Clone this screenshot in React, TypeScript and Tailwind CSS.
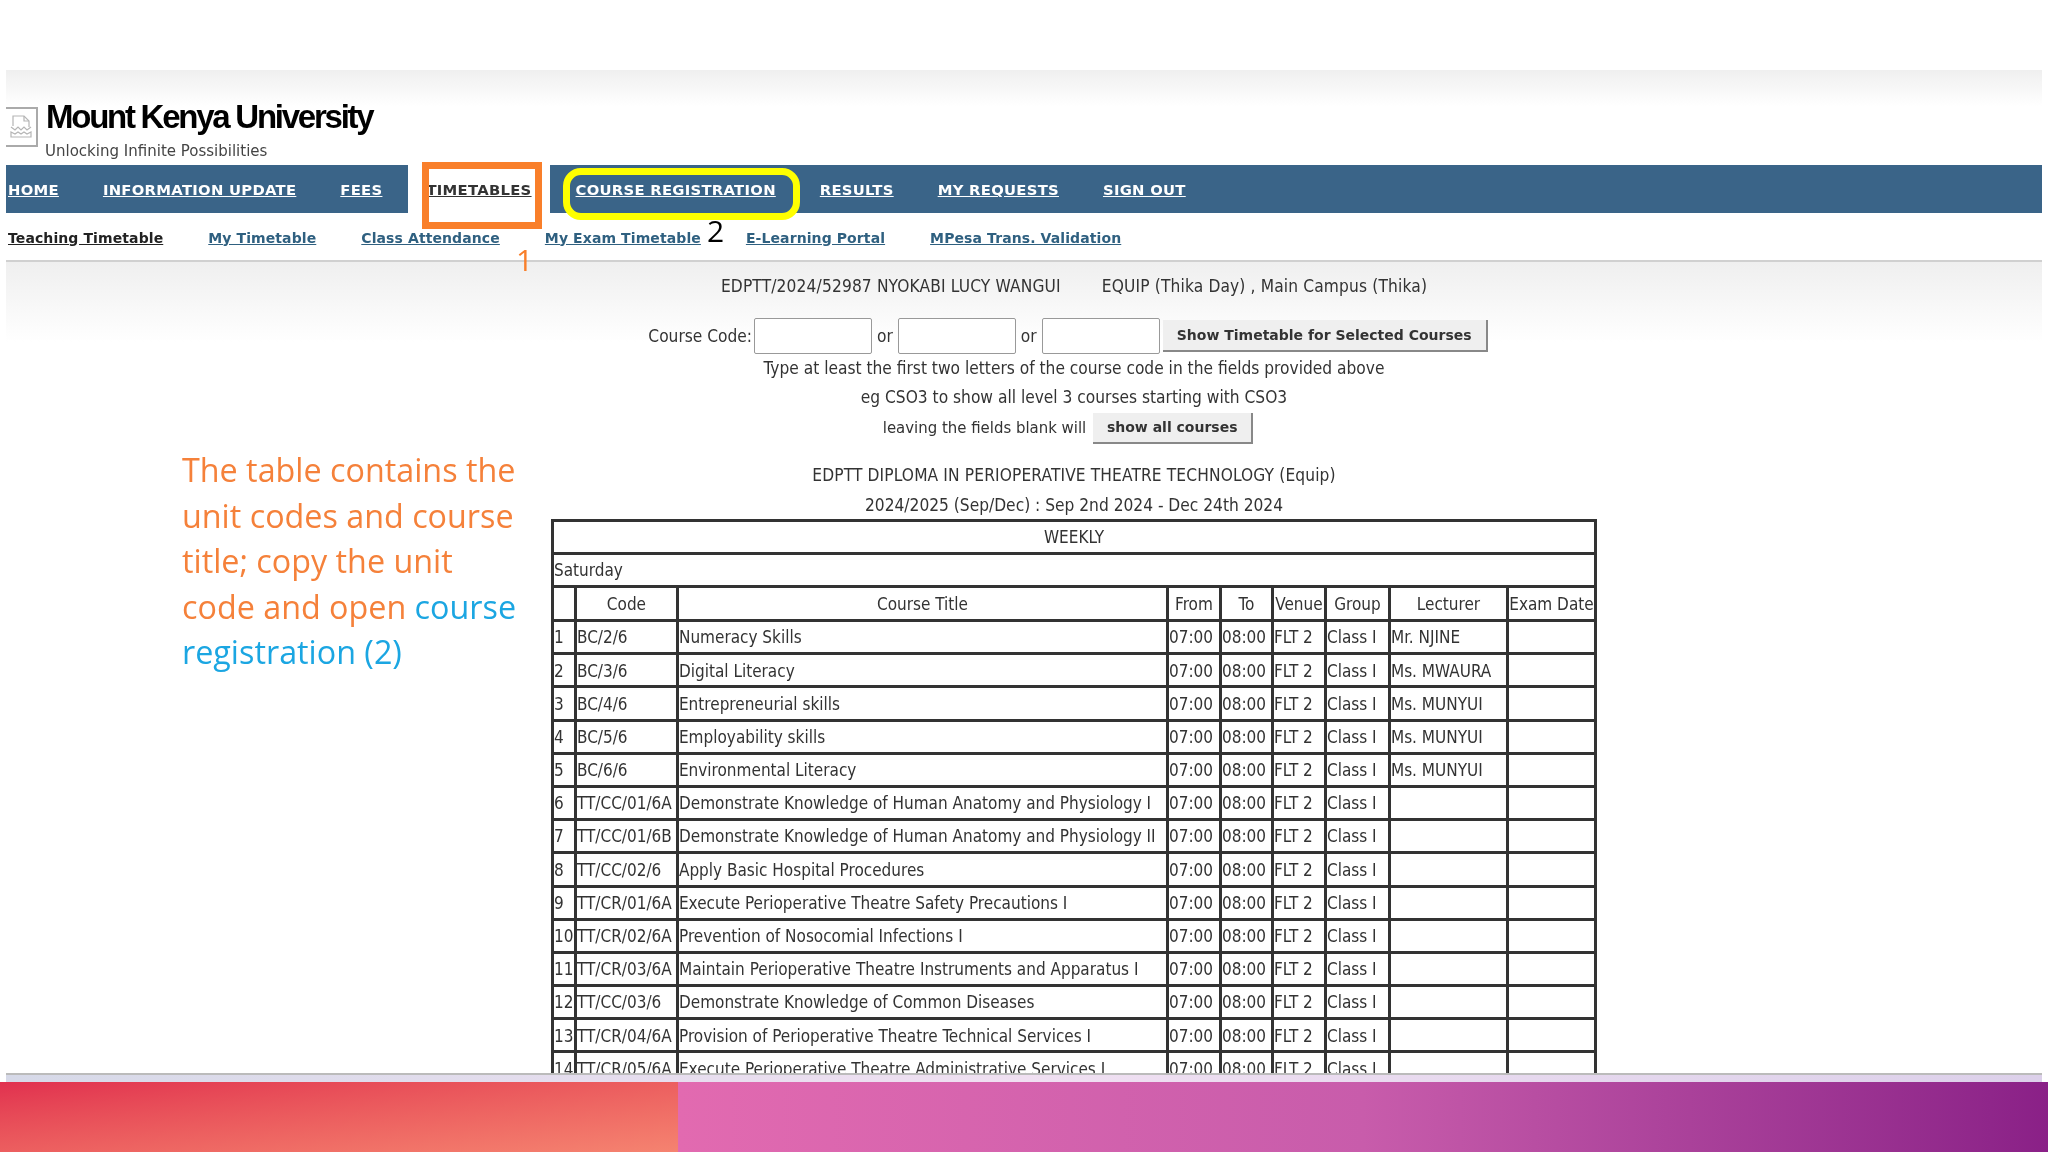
const mainNav = ["HOME", "INFORMATION UPDATE", "FEES", "TIMETABLES", "COURSE REGISTRATION", "RESULTS", "MY REQUESTS", "SIGN OUT"];

const subNav = ["Teaching Timetable", "My Timetable", "Class Attendance", "My Exam Timetable", "E-Learning Portal", "MPesa Trans. Validation"];

const courses = [
  ["1", "BC/2/6", "Numeracy Skills", "Mr. NJINE"],
  ["2", "BC/3/6", "Digital Literacy", "Ms. MWAURA"],
  ["3", "BC/4/6", "Entrepreneurial skills", "Ms. MUNYUI"],
  ["4", "BC/5/6", "Employability skills", "Ms. MUNYUI"],
  ["5", "BC/6/6", "Environmental Literacy", "Ms. MUNYUI"],
  ["6", "TT/CC/01/6A", "Demonstrate Knowledge of Human Anatomy and Physiology I", ""],
  ["7", "TT/CC/01/6B", "Demonstrate Knowledge of Human Anatomy and Physiology II", ""],
  ["8", "TT/CC/02/6", "Apply Basic Hospital Procedures", ""],
  ["9", "TT/CR/01/6A", "Execute Perioperative Theatre Safety Precautions I", ""],
  ["10", "TT/CR/02/6A", "Prevention of Nosocomial Infections I", ""],
  ["11", "TT/CR/03/6A", "Maintain Perioperative Theatre Instruments and Apparatus I", ""],
  ["12", "TT/CC/03/6", "Demonstrate Knowledge of Common Diseases", ""],
  ["13", "TT/CR/04/6A", "Provision of Perioperative Theatre Technical Services I", ""],
  ["14", "TT/CR/05/6A", "Execute Perioperative Theatre Administrative Services I", ""],
];

const cell = "border-[3px] border-[#333] p-0 pt-[2px] whitespace-nowrap overflow-hidden";

function BrokenImage() {
  return (
    <div className="w-[32px] h-[40px] mt-[1px] border-t-2 border-r-2 border-b-2 border-[#aaa] flex items-center justify-center">
      <svg width="24" height="26" viewBox="0 0 24 26" fill="none" stroke="#b5b5b5" strokeWidth="1.2">
        <path d="M4 12V2h11l5 5v6" />
        <path d="M15 2v5h5" />
        <path d="M2 13l4 3 3-3 3 3 3-3 3 3 4-3" />
        <path d="M2 18l4 2 3-2 3 2 3-2 3 2 4-2v5H2z" />
      </svg>
    </div>
  );
}

export default function App() {
  return (
    <div className="relative w-[2048px] h-[1152px] overflow-hidden bg-white flex flex-col font-['DejaVu_Sans_Condensed','DejaVu_Sans',sans-serif] text-[#333]">
      <div className="relative mx-[6px] mt-[70px] h-[1003px] overflow-hidden bg-white blur-[0.4px]">
        <div className="h-[36px] bg-gradient-to-b from-[#efefef] to-white" />

        {/* logo */}
        <div className="h-[59px] flex items-start">
          <BrokenImage />
          <div className="ml-[8px] -mt-[7px]">
            <div className="font-['Liberation_Sans',sans-serif] font-bold text-[33px] leading-[36px] tracking-[-2.25px] text-black">Mount Kenya University</div>
            <div className="text-[16.7px] leading-[20px] text-[#444] mt-[5px] -ml-[1px]">Unlocking Infinite Possibilities</div>
          </div>
        </div>

        <nav className="h-[48px] pt-[3px] bg-[#3a6488] flex items-center pl-[2px] gap-[44px] font-['DejaVu_Sans',sans-serif] font-bold text-[14.8px] tracking-[0.28px]">
          {mainNav.map((item) =>
            item === "TIMETABLES" ? (
              <span key={item} className="relative self-stretch flex items-center text-[#333] underline">
                <span className="absolute -left-[18px] -right-[18px] -top-[3px] h-[60px] bg-white" />
                <span className="relative">{item}</span>
              </span>
            ) : (
              <span key={item} className="text-white underline">{item}</span>
            )
          )}
        </nav>

        <div className="h-[49px] pt-[3px] border-b-2 border-[#d0d0d0] flex items-center pl-[2px] gap-[45px] font-['DejaVu_Sans',sans-serif] font-bold text-[14px] tracking-[0.1px] text-[#2f6080]">
          {subNav.map((item, i) => (
            <span key={item} className={i === 0 ? "text-[#222] underline" : "underline"}>{item}</span>
          ))}
        </div>

        {/* main content */}
        <div className="pl-[100px] flex flex-col items-center bg-gradient-to-b from-[#efefef] to-white to-[80px] text-[17.2px]">
          <div className="mt-[13px] h-[24px] flex items-center gap-[41px] tracking-[0.15px]">
            <span>EDPTT/2024/52987 NYOKABI LUCY WANGUI</span>
            <span>EQUIP (Thika Day) , Main Campus (Thika)</span>
          </div>
          <div className="mt-[18px] mr-[12px] h-[38px] flex items-center">
            <span className="pt-[2px]">Course Code:</span>
            <span className="w-[118px] h-[36px] ml-[2px] border border-[#999] rounded-[2px] bg-white" />
            <span className="mx-[5px] pt-[2px]">or</span>
            <span className="w-[118px] h-[36px] border border-[#999] rounded-[2px] bg-white" />
            <span className="mx-[5px] pt-[2px]">or</span>
            <span className="w-[118px] h-[36px] border border-[#999] rounded-[2px] bg-white" />
            <button className="ml-[3px] w-[325px] h-[32px] bg-[#efefef] border-r-2 border-b-2 border-[#888] font-['DejaVu_Sans',sans-serif] font-bold text-[14px] text-[#333]">
              Show Timetable for Selected Courses
            </button>
          </div>
          <div className="mt-[1px] h-[24px] leading-[24px]">Type at least the first two letters of the course code in the fields provided above</div>
          <div className="mt-[5px] h-[24px] leading-[24px]">eg CSO3 to show all level 3 courses starting with CSO3</div>
          <div className="mt-[3px] mr-[12px] h-[32px] flex items-center gap-[7px] text-[16.6px]">
            <span>leaving the fields blank will</span>
            <button className="w-[160px] h-[31px] bg-[#efefef] border-r-2 border-b-2 border-[#888] font-['DejaVu_Sans',sans-serif] font-bold text-[14px] text-[#333]">
              show all courses
            </button>
          </div>
          <div className="mt-[19px] h-[24px] leading-[24px] tracking-[0.13px]">EDPTT DIPLOMA IN PERIOPERATIVE THEATRE TECHNOLOGY (Equip)</div>
          <div className="mt-[6px] h-[24px] leading-[24px]">2024/2025 (Sep/Dec) : Sep 2nd 2024 - Dec 24th 2024</div>

          <table className="mt-[2px] w-[1043px] table-fixed border-collapse border-[3px] border-[#333] bg-white text-[17px] shrink-0">
            <colgroup>
              <col className="w-[23px]" />
              <col className="w-[102px]" />
              <col className="w-[490px]" />
              <col className="w-[53px]" />
              <col className="w-[52px]" />
              <col className="w-[53px]" />
              <col className="w-[64px]" />
              <col className="w-[118px]" />
              <col className="w-[88px]" />
            </colgroup>
            <tbody>
              <tr className="h-[33px]">
                <td colSpan={9} className={`${cell} text-center`}>WEEKLY</td>
              </tr>
              <tr className="h-[33px]">
                <td colSpan={9} className={cell}>Saturday</td>
              </tr>
              <tr className="h-[34px] text-center">
                <td className={cell}></td>
                <td className={cell}>Code</td>
                <td className={cell}>Course Title</td>
                <td className={cell}>From</td>
                <td className={cell}>To</td>
                <td className={cell}>Venue</td>
                <td className={cell}>Group</td>
                <td className={cell}>Lecturer</td>
                <td className={cell}>Exam Date</td>
              </tr>
              {courses.map((c) => (
                <tr key={c[0]} className="h-[33.2px]">
                  <td className={cell}>{c[0]}</td>
                  <td className={cell}>{c[1]}</td>
                  <td className={cell}>{c[2]}</td>
                  <td className={cell}>07:00</td>
                  <td className={cell}>08:00</td>
                  <td className={cell}>FLT 2</td>
                  <td className={cell}>Class I</td>
                  <td className={cell}>{c[3]}</td>
                  <td className={cell}></td>
                </tr>
              ))}
            </tbody>
          </table>
        </div>

        {/* annotations drawn over the screenshot */}
        <div className="absolute left-[416px] top-[92px] w-[120px] h-[67px] border-[7px] border-[#f97f2a]" />
        <div className="absolute left-[557px] top-[98px] w-[237px] h-[52px] border-[7px] border-[#ffff00] rounded-[18px]" />
        <span className="absolute left-[510px] top-[172px] font-['Open_Sans',sans-serif] text-[30px] leading-[36px] text-[#f97f2a]">1</span>
        <span className="absolute left-[701px] top-[143px] font-['Open_Sans',sans-serif] text-[30px] leading-[36px] text-black">2</span>
        <div className="absolute left-[176px] top-[377px] w-[342px] font-['Open_Sans',sans-serif] text-[32.3px] leading-[45.5px] text-[#f5813a]">
          The table contains the unit codes and course title; copy the unit code and open <span className="text-[#1ba6e2]">course registration (2)</span>
        </div>
      </div>

      <div className="mx-[6px] h-[9px] border-t-2 border-[#bbb] bg-gradient-to-r from-[#d6d9e8] via-[#f0e0f2] to-[#dcd0ea]" />
      <div className="flex-1 flex">
        <div className="w-[678px] bg-gradient-to-br from-[#e1304f] to-[#f58370]" />
        <div className="flex-1 bg-gradient-to-r from-[#e26ab0] via-[#c85cab] to-[#8a2087]" />
      </div>
    </div>
  );
}
